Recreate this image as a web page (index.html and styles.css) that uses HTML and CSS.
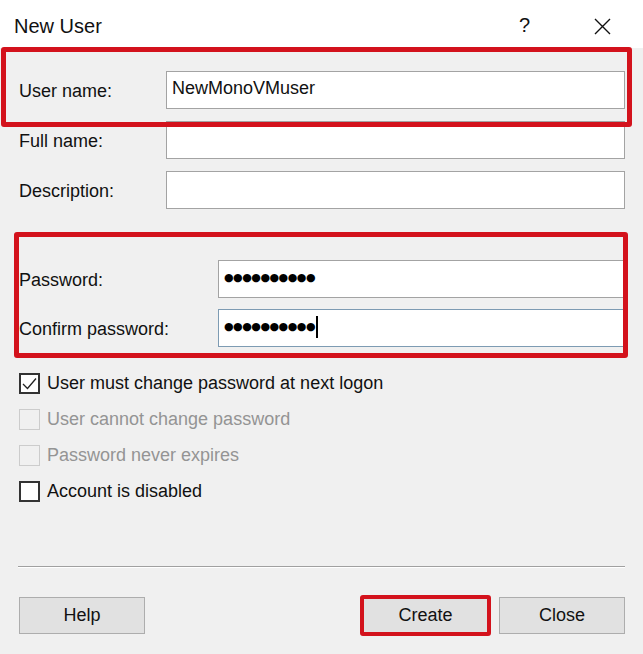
FILE: index.html
```html
<!DOCTYPE html>
<html>
<head>
<meta charset="utf-8">
<link rel="stylesheet" href="styles.css">
</head>
<body>
<div class="dialog">
  <div class="titlebar">
    <span class="title">New User</span>
    <span class="help-glyph">?</span>
    <span class="close-glyph"><svg width="17" height="17" viewBox="0 0 17 17"><path d="M1 1 L16 16 M16 1 L1 16" stroke="#111" stroke-width="1.4" fill="none"/></svg></span>
  </div>
  <div class="body">
    <div class="row row-user">
      <span class="label">User name:</span>
      <div class="input wide">NewMonoVMuser</div>
    </div>
    <div class="row row-full">
      <span class="label">Full name:</span>
      <div class="input wide"></div>
    </div>
    <div class="row row-desc">
      <span class="label">Description:</span>
      <div class="input wide"></div>
    </div>
    <div class="row row-pass">
      <span class="label">Password:</span>
      <div class="input narrow"><span class="dots">●●●●●●●●●●</span></div>
    </div>
    <div class="row row-confirm">
      <span class="label">Confirm password:</span>
      <div class="input narrow focused"><span class="dots">●●●●●●●●●●</span><span class="caret"></span></div>
    </div>
    <div class="checks">
      <div class="check"><span class="box checked"><svg width="17" height="17" viewBox="0 0 17 17"><path d="M2 9 L6.5 13.5 L15 3.5" stroke="#222" stroke-width="1.3" fill="none"/></svg></span><span>User must change password at next logon</span></div>
      <div class="check disabled"><span class="box"></span><span>User cannot change password</span></div>
      <div class="check disabled"><span class="box"></span><span>Password never expires</span></div>
      <div class="check"><span class="box"></span><span>Account is disabled</span></div>
    </div>
    <div class="separator"></div>
    <div class="buttons">
      <div class="btn">Help</div>
      <div class="spacer"></div>
      <div class="btn btn-highlight">Create</div>
      <div class="btn">Close</div>
    </div>
  </div>
  <div class="highlight hl-user"></div>
  <div class="highlight hl-pass"></div>
</div>
</body>
</html>
```
FILE: styles.css
```css
html, body {
  margin: 0;
  padding: 0;
  background: #f0f0f0;
}
.dialog {
  position: relative;
  width: 643px;
  height: 654px;
  background: #f0f0f0;
  font-family: "Liberation Sans", Arial, sans-serif;
  color: #111;
  overflow: hidden;
}
.titlebar {
  height: 48px;
  background: #ffffff;
  display: flex;
  align-items: center;
  padding-left: 14px;
  box-sizing: border-box;
}
.title {
  font-size: 20px;
  flex: 1;
  margin-top: 4px;
}
.help-glyph {
  font-size: 20px;
  width: 20px;
  margin-right: 55px;
  margin-top: 2px;
}
.close-glyph {
  display: flex;
  margin-right: 32px;
  margin-top: 4px;
}
.body {
  padding: 0 18px 0 19px;
}
.row {
  display: flex;
  align-items: center;
  height: 38px;
}
.label {
  font-size: 18px;
  flex: 1;
  padding-top: 3px;
}
.input {
  height: 38px;
  box-sizing: border-box;
  background: #fff;
  border: 1px solid #a3a3a3;
  font-size: 18px;
  padding: 6px 0 0 5px;
  display: flex;
  align-items: flex-start;
}
.input.wide { width: 459px; }
.input.narrow { width: 407px; }
.input.focused { border-color: #7d9bb3; }
.row-user { margin-top: 23px; }
.row-full { margin-top: 12px; }
.row-desc { margin-top: 12px; }
.row-pass { margin-top: 51px; }
.row-confirm { margin-top: 11px; }
.dots {
  font-family: "DejaVu Sans", sans-serif;
  font-size: 11px;
  letter-spacing: -0.5px;
  line-height: 22px;
  color: #000;
}
.caret {
  width: 2px;
  height: 22px;
  background: #000;
  margin-left: 1px;
}
.checks {
  margin-top: 25px;
  display: flex;
  flex-direction: column;
  gap: 14px;
}
.check {
  display: flex;
  align-items: center;
  height: 22px;
  font-size: 18px;
  gap: 7px;
}
.check.disabled { color: #949494; }
.box {
  width: 21px;
  height: 21px;
  box-sizing: border-box;
  border: 2px solid #333;
  background: #fff;
  display: flex;
  align-items: center;
  justify-content: center;
}
.check.disabled .box { border: 1px solid #cccccc; background: #f0f0f0; }
.separator {
  margin-top: 64px;
  height: 1px;
  background: #a0a0a0;
  border-bottom: 1px solid #fff;
  margin-left: -1px;
}
.buttons {
  margin-top: 29px;
  display: flex;
  align-items: center;
  gap: 10px;
}
.spacer { flex: 1; }
.btn {
  width: 126px;
  height: 37px;
  box-sizing: border-box;
  background: #e1e1e1;
  border: 1px solid #adadad;
  font-size: 18px;
  display: flex;
  align-items: center;
  justify-content: center;
}
.btn-highlight {
  width: 127px;
  outline: 4px solid #d3121c;
  outline-offset: -2px;
  border-radius: 1px;
}
.highlight {
  position: absolute;
  border: 5px solid #d3121c;
  border-radius: 3px;
  box-sizing: border-box;
}
.hl-user {
  left: 1px;
  top: 47px;
  width: 631px;
  height: 80px;
}
.hl-pass {
  left: 14px;
  top: 232px;
  width: 614px;
  height: 126px;
}
```
